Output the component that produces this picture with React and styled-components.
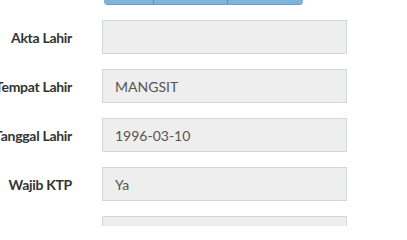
import React from 'react'
import styled, { createGlobalStyle } from 'styled-components'

const GlobalStyle = createGlobalStyle`
  body {
    margin: 0;
    background: #ffffff;
    font-family: Lato, "Open Sans", "Liberation Sans", sans-serif;
    overflow: hidden;
  }
`

const fields = [
  { label: 'Akta Lahir', value: '' },
  { label: 'Tempat Lahir', value: 'MANGSIT' },
  { label: 'Tanggal Lahir', value: '1996-03-10' },
  { label: 'Wajib KTP', value: 'Ya' },
  { label: 'Agama', value: '' },
]

function App() {
  return (
    <Page>
      <GlobalStyle />
      <ButtonGroup>
        <GroupButton $width={49} />
        <GroupButton $width={74} />
        <GroupButton $width={76} />
      </ButtonGroup>
      <Form>
        {fields.map((f) => (
          <FormGroup key={f.label}>
            <Label>{f.label}</Label>
            <Input readOnly value={f.value} />
          </FormGroup>
        ))}
      </Form>
    </Page>
  )
}

export default App

const Page = styled.div`
  width: 407px;
  height: 226px;
  overflow: hidden;
`

const ButtonGroup = styled.div`
  display: flex;
  margin-left: 104px;
  height: 5px;
`

const GroupButton = styled.div`
  width: ${(p) => p.$width}px;
  height: 5px;
  background: #7eb3da;
  border-bottom: 1px solid #6a9fc9;
  border-left: 1px solid #5f8fb5;
  box-sizing: border-box;

  &:first-child {
    border-left: none;
    border-bottom-left-radius: 4px;
  }
  &:last-child {
    border-bottom-right-radius: 4px;
  }
`

const Form = styled.form`
  display: flex;
  flex-direction: column;
  gap: 15px;
  margin-top: 15px;
`

const FormGroup = styled.div`
  display: grid;
  grid-template-columns: 87px 245px;
  column-gap: 15px;
  align-items: center;
`

const Label = styled.label`
  justify-self: end;
  padding-right: 15px;
  white-space: nowrap;
  font-size: 14px;
  font-weight: 700;
  letter-spacing: -0.3px;
  color: #333333;
`

const Input = styled.input`
  box-sizing: border-box;
  width: 245px;
  height: 34px;
  padding: 6px 12px;
  background: #eeeeee;
  border: 1px solid #d2d6de;
  border-radius: 0;
  font-family: Lato, "Open Sans", "Liberation Sans", sans-serif;
  font-size: 14px;
  color: #555555;
  outline: none;
`
